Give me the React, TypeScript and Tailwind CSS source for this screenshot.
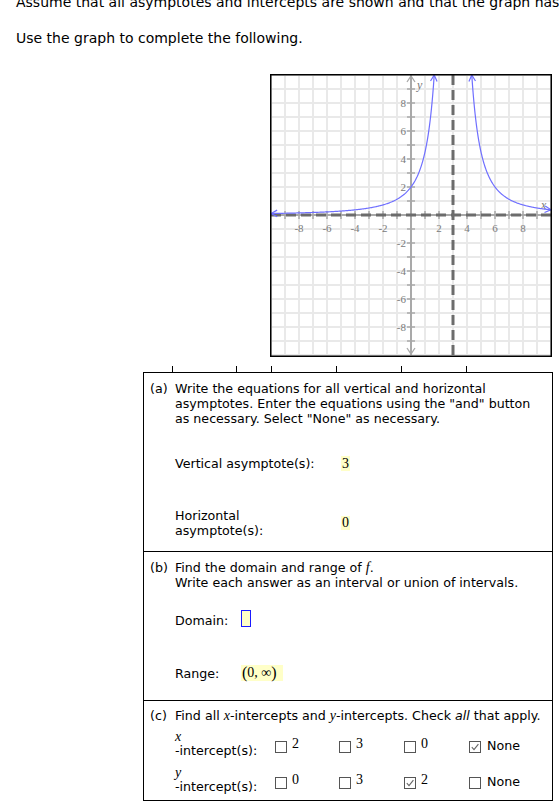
import React from "react";

const X0 = 141;
const Y0 = 141;
const U = 14;
const px = (x: number) => X0 + U * x;
const py = (y: number) => Y0 - U * y;
const f = (x: number) => 18 / ((x - 3) * (x - 3));

function branch(a: number, b: number, n = 240) {
  let d = "";
  for (let i = 0; i <= n; i++) {
    const x = a + ((b - a) * i) / n;
    d += (i ? "L" : "M") + px(x).toFixed(2) + " " + py(f(x)).toFixed(2);
  }
  return d;
}

function arrowAt(x: number, dirSign: number) {
  const fp = -36 / Math.pow(x - 3, 3);
  let dx = U * dirSign;
  let dy = -U * fp * dirSign;
  const len = Math.hypot(dx, dy);
  dx /= len;
  dy /= len;
  const P = [px(x), py(f(x))];
  const L = 7;
  const ang = (28 * Math.PI) / 180;
  const rot = (a: number) => [
    -(dx * Math.cos(a) - dy * Math.sin(a)),
    -(dx * Math.sin(a) + dy * Math.cos(a)),
  ];
  const r1 = rot(ang);
  const r2 = rot(-ang);
  return `M${(P[0] + L * r1[0]).toFixed(2)} ${(P[1] + L * r1[1]).toFixed(2)}L${P[0].toFixed(2)} ${P[1].toFixed(2)}L${(P[0] + L * r2[0]).toFixed(2)} ${(P[1] + L * r2[1]).toFixed(2)}`;
}

function Graph() {
  const ints = Array.from({ length: 21 }, (_, i) => i - 10);
  const ticks = ints.filter((i) => i !== 0 && Math.abs(i) < 10);
  const labels = [-8, -6, -4, -2, 2, 4, 6, 8];
  const xl = 3 - Math.sqrt(1.8);
  const xr = 3 + Math.sqrt(1.8);
  return (
    <svg width="282" height="283" viewBox="0 0 282 283" className="block">
      <rect x="0" y="0" width="282" height="283" fill="#ffffff" />
      {ints.map((i) => (
        <line key={"v" + i} x1={px(i)} y1={py(10)} x2={px(i)} y2={py(-10)} stroke="#e9e9e9" strokeWidth="2" />
      ))}
      {ints.map((i) => (
        <line key={"h" + i} x1={px(-10)} y1={py(i)} x2={px(10)} y2={py(i)} stroke="#e9e9e9" strokeWidth="2" />
      ))}
      <line x1={px(0)} y1={py(10)} x2={px(0)} y2={py(-10)} stroke="#a9a9a9" strokeWidth="2" />
      <line x1={px(-10)} y1={py(0)} x2={px(10)} y2={py(0)} stroke="#a9a9a9" strokeWidth="2" />
      {ticks.map((i) => (
        <line key={"tx" + i} x1={px(i)} y1={py(0) - 4} x2={px(i)} y2={py(0) + 4} stroke="#a9a9a9" strokeWidth="1.5" />
      ))}
      {ticks.map((i) => (
        <line key={"ty" + i} x1={px(0) - 4} y1={py(i)} x2={px(0) + 4} y2={py(i)} stroke="#a9a9a9" strokeWidth="1.5" />
      ))}
      <path d={`M${px(0) - 4} ${py(10) + 7}L${px(0)} ${py(10) + 1}L${px(0) + 4} ${py(10) + 7}`} fill="none" stroke="#a9a9a9" strokeWidth="1.3" />
      <path d={`M${px(0) - 4} ${py(-10) - 7}L${px(0)} ${py(-10) - 1}L${px(0) + 4} ${py(-10) - 7}`} fill="none" stroke="#a9a9a9" strokeWidth="1.3" />
      {labels.map((v) => (
        <text key={"lx" + v} x={px(v)} y={py(0) + 17} textAnchor="middle" fontFamily="'Liberation Serif', serif" fontSize="11" fill="#7a7a7a">
          {v}
        </text>
      ))}
      {labels.map((v) => (
        <text key={"ly" + v} x={px(0) - 5} y={py(v) + 4} textAnchor="end" fontFamily="'Liberation Serif', serif" fontSize="11" fill="#7a7a7a">
          {v}
        </text>
      ))}
      <text x={px(0) + 6} y={py(10) + 14} fontFamily="'Liberation Serif', serif" fontStyle="italic" fontSize="12" fill="#777">
        y
      </text>
      <text x={px(10) - 10} y={py(0) - 6} fontFamily="'Liberation Serif', serif" fontStyle="italic" fontSize="12" fill="#777">
        x
      </text>
      <line x1={px(-10)} y1={py(0)} x2={px(10)} y2={py(0)} stroke="#6c6c6c" strokeWidth="3" strokeDasharray="10 5" />
      <line x1={px(3)} y1={py(10)} x2={px(3)} y2={py(-10)} stroke="#6c6c6c" strokeWidth="3" strokeDasharray="10 5" />
      <path d={branch(-10, xl)} fill="none" stroke="#6f6fff" strokeWidth="1.2" />
      <path d={branch(xr, 10)} fill="none" stroke="#6f6fff" strokeWidth="1.2" />
      <path d={arrowAt(-10, -1)} fill="none" stroke="#6f6fff" strokeWidth="1.2" />
      <path d={arrowAt(xl, 1)} fill="none" stroke="#6f6fff" strokeWidth="1.2" />
      <path d={arrowAt(xr, -1)} fill="none" stroke="#6f6fff" strokeWidth="1.2" />
      <path d={arrowAt(10, 1)} fill="none" stroke="#6f6fff" strokeWidth="1.2" />
      <rect x="0.75" y="0.75" width="280.5" height="281.5" fill="none" stroke="#000" strokeWidth="1.5" />
    </svg>
  );
}

function Check({ checked }: { checked?: boolean }) {
  return (
    <span className="relative inline-block w-[12px] h-[12px] border border-[#555] bg-white shrink-0">
      {checked && (
        <svg width="10" height="10" viewBox="0 0 10 10" className="absolute left-0 top-0">
          <path d="M1.8 5.2 L4 7.6 L8.4 2.2" fill="none" stroke="#666" strokeWidth="1.1" />
        </svg>
      )}
    </span>
  );
}

const serif = "font-['Liberation_Serif',serif]";

function Opt({ label, checked, none, w }: { label: string; checked?: boolean; none?: boolean; w: string }) {
  return (
    <div className={`${w} flex items-start pt-[10px]`}>
      <Check checked={checked} />
      {none ? (
        <span className="ml-[6px] -mt-[3px] leading-[15px]">{label}</span>
      ) : (
        <span className={`ml-[5px] -mt-[4px] leading-[14px] text-[14px] ${serif}`}>{label}</span>
      )}
    </div>
  );
}

export default function App() {
  return (
    <div className="w-[559px] h-[803px] overflow-hidden bg-white text-black font-['DejaVu_Sans',sans-serif] text-[14px]">
      <p className="-mt-[6px] pl-[16px] leading-[16px] whitespace-nowrap">
        Assume that all asymptotes and intercepts are shown and that the graph has no characteristics other than what is shown.
      </p>
      <p className="mt-[20px] pl-[16px] leading-[16px] whitespace-nowrap">Use the graph to complete the following.</p>
      <div className="ml-[270px] mt-[28px]">
        <Graph />
      </div>
      <div className="ml-[143px] mt-[9px] w-[410px] text-[12.65px]">
        <div className="flex h-[6px]">
          <div className="w-[30px] border-r border-black" />
          <div className="w-[64px] border-r border-black" />
          <div className="w-[35px] border-r border-black" />
          <div className="w-[65px] border-r border-black" />
          <div className="w-[65px] border-r border-black" />
          <div className="w-[65px] border-r border-black" />
          <div className="flex-1" />
        </div>
        <div className="border-[1.5px] border-black">
          {/* (a) */}
          <div className="pt-[8px] pb-[13px] leading-[15px]">
            <div className="flex pl-[6px]">
              <span className="w-[25px] shrink-0">(a)</span>
              <div>
                Write the equations for all vertical and horizontal
                <br />
                asymptotes. Enter the equations using the "and" button
                <br />
                as necessary. Select "None" as necessary.
              </div>
            </div>
            <div className="flex items-center ml-[31px] mt-[30px] h-[15px]">
              <span className="w-[166px] shrink-0">Vertical asymptote(s):</span>
              <span className={`bg-[#ffffc8] h-[15px] px-[1px] leading-[15px] text-[14px] ${serif}`}>3</span>
            </div>
            <div className="flex items-center ml-[31px] mt-[37px]">
              <span className="w-[166px] shrink-0">
                Horizontal
                <br />
                asymptote(s):
              </span>
              <span className={`bg-[#ffffc8] h-[14px] px-[1px] leading-[14px] text-[14px] ${serif}`}>0</span>
            </div>
          </div>
          {/* (b) */}
          <div className="border-t-[1.5px] border-black pt-[8px] pb-[19px] leading-[15px]">
            <div className="flex pl-[6px]">
              <span className="w-[25px] shrink-0">(b)</span>
              <div>
                Find the domain and range of <i className={`${serif} text-[14px]`}>f</i>.
                <br />
                Write each answer as an interval or union of intervals.
              </div>
            </div>
            <div className="flex items-center ml-[31px] mt-[20px] h-[17px]">
              <span className="w-[66px] shrink-0 pt-[4px]">Domain:</span>
              <span className="w-[10px] h-[17px] border border-[#1a1aff] bg-[#ffffc8]" />
            </div>
            <div className="flex items-center ml-[31px] mt-[38px] h-[16px]">
              <span className="w-[66px] shrink-0">Range:</span>
              <span className={`bg-[#ffffc8] h-[16px] w-[42px] flex items-center pl-[1px] ${serif} text-[14px] leading-[16px]`}>
                <span className="text-[16px]">(</span>0,&nbsp;∞<span className="text-[16px]">)</span>
              </span>
            </div>
          </div>
          {/* (c) */}
          <div className="border-t-[1.5px] border-black pt-[7px] pb-[6px]">
            <div className="flex pl-[6px] leading-[15px]">
              <span className="w-[25px] shrink-0">(c)</span>
              <div>
                Find all <i className={`${serif} text-[14px]`}>x</i>-intercepts and <i className={`${serif} text-[14px]`}>y</i>-intercepts. Check <i>all</i> that apply.
              </div>
            </div>
            <div className="flex ml-[31px] mt-[8px]">
              <div className="w-[100px] shrink-0">
                <div className={`${serif} italic text-[14px] leading-[12px]`}>x</div>
                <div className="leading-[15px]">-intercept(s):</div>
              </div>
              <Opt w="w-[64px]" label="2" />
              <Opt w="w-[65px]" label="3" />
              <Opt w="w-[65px]" label="0" />
              <Opt w="w-[80px]" label="None" none checked />
            </div>
            <div className="flex ml-[31px] mt-[9px]">
              <div className="w-[100px] shrink-0">
                <div className={`${serif} italic text-[14px] leading-[12px]`}>y</div>
                <div className="leading-[15px]">-intercept(s):</div>
              </div>
              <Opt w="w-[64px]" label="0" />
              <Opt w="w-[65px]" label="3" />
              <Opt w="w-[65px]" label="2" checked />
              <Opt w="w-[80px]" label="None" none />
            </div>
          </div>
        </div>
      </div>
    </div>
  );
}
